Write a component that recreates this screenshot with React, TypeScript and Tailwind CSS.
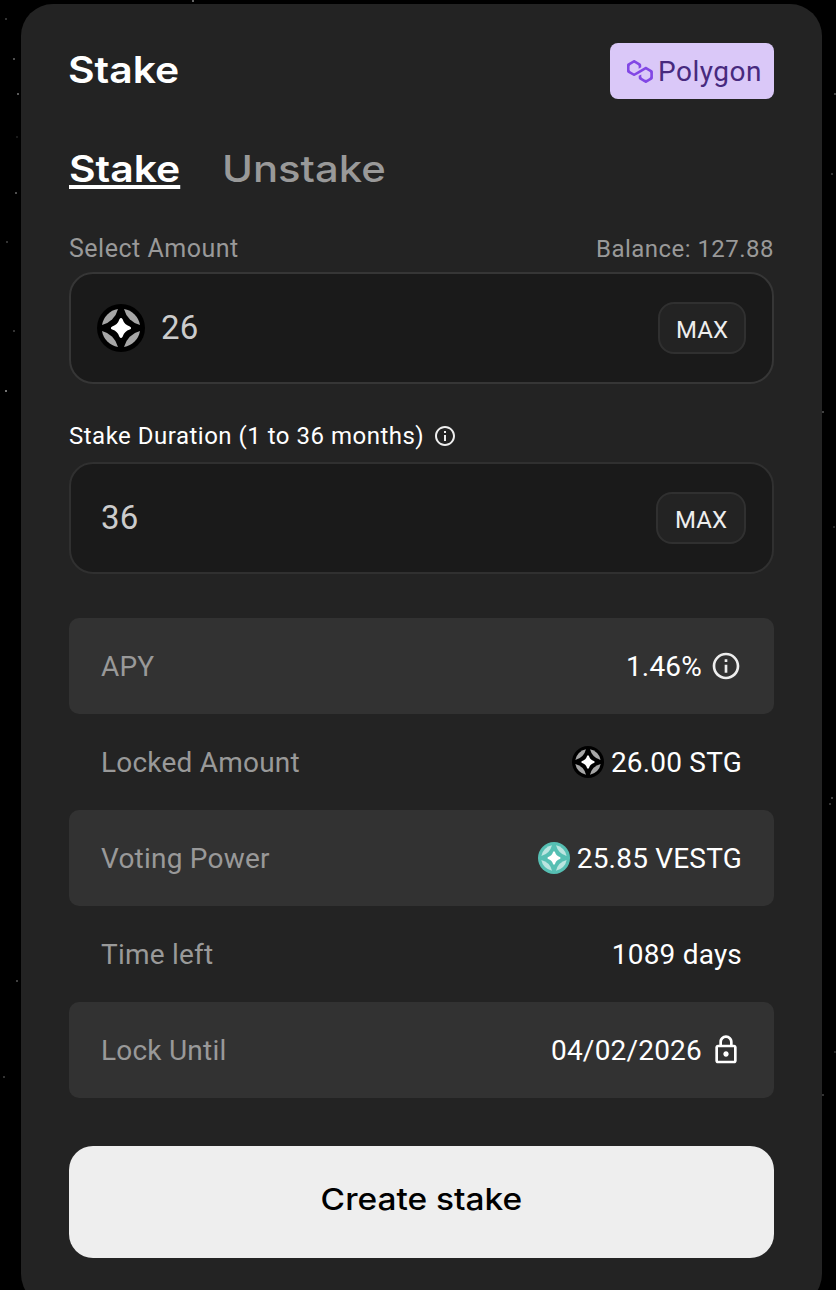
import type { ReactNode } from "react";

function Token({ size, ring, petal }: { size: number; ring: string; petal: string }) {
  return (
    <svg width={size} height={size} viewBox="0 0 48 48" className="shrink-0">
      <circle cx="24" cy="24" r="24" fill={ring} />
      {[0, 90, 180, 270].map((a) => (
        <path key={a} d="M5 21A19.300 19.300 0 0 1 21 5A22 22 0 0 1 5 21Z" fill={petal} transform={`rotate(${a} 24 24)`} />
      ))}
      <path d="M22.400 15.200Q24 12.600 25.600 15.200Q27.300 20.700 32.800 22.400Q35.400 24 32.800 25.600Q27.300 27.300 25.600 32.800Q24 35.400 22.400 32.800Q20.700 27.300 15.200 25.600Q12.600 24 15.200 22.400Q20.700 20.700 22.400 15.200Z" fill="#fff" />
    </svg>
  );
}

function Info({ size }: { size: number }) {
  return (
    <svg width={size} height={size} viewBox="0 0 24 24" fill="#eee" className="shrink-0">
      <path d="M11 7h2v2h-2zm0 4h2v6h-2zm1-9C6.480 2 2 6.480 2 12s4.480 10 10 10 10-4.480 10-10S17.520 2 12 2zm0 18c-4.410 0-8-3.590-8-8s3.590-8 8-8 8 3.590 8 8-3.590 8-8 8z" />
    </svg>
  );
}

function Lock() {
  return (
    <svg width="32" height="32" viewBox="0 0 24 24" fill="#fff" className="shrink-0">
      <path d="M18 8h-1V6c0-2.760-2.240-5-5-5S7 3.240 7 6v2H6c-1.100 0-2 .9-2 2v10c0 1.100.9 2 2 2h12c1.100 0 2-.9 2-2V10c0-1.100-.9-2-2-2zM9 6c0-1.660 1.340-3 3-3s3 1.340 3 3v2H9V6zm9 14H6V10h12v10zm-6-3c1.100 0 2-.9 2-2s-.9-2-2-2-2 .9-2 2 .9 2 2 2z" />
    </svg>
  );
}

function Polygon() {
  return (
    <svg width="26" height="23" viewBox="0 0 38.400 33.500" fill="#8247e5" className="shrink-0">
      <path d="M29 10.200c-.7-.4-1.600-.4-2.400 0L21 13.500l-3.800 2.100-5.500 3.300c-.7.4-1.600.4-2.400 0L5 16.300c-.7-.4-1.200-1.200-1.200-2.100v-5c0-.8.4-1.600 1.200-2.100l4.300-2.500c.7-.4 1.600-.4 2.400 0L16 7.200c.7.4 1.200 1.200 1.200 2.100v3.300l3.800-2.200V7c0-.8-.4-1.600-1.200-2.100l-8-4.700c-.7-.4-1.600-.4-2.400 0L1.200 5C.4 5.400 0 6.200 0 7v9.400c0 .8.400 1.600 1.200 2.100l8.100 4.700c.7.4 1.600.4 2.400 0l5.500-3.200 3.800-2.200 5.500-3.200c.7-.4 1.600-.4 2.400 0l4.300 2.500c.7.4 1.200 1.200 1.200 2.100v5c0 .8-.4 1.600-1.200 2.100L29 28.800c-.7.4-1.600.4-2.400 0l-4.300-2.500c-.7-.4-1.200-1.200-1.200-2.100V21l-3.800 2.200v3.300c0 .8.4 1.600 1.200 2.100l8.100 4.700c.7.4 1.600.4 2.400 0l8.100-4.700c.7-.4 1.200-1.200 1.200-2.100V17c0-.8-.4-1.600-1.200-2.100L29 10.200z" />
    </svg>
  );
}

function MaxButton({ width }: { width: string }) {
  return (
    <button className={`${width} h-[52px] shrink-0 rounded-[16px] border-2 border-[#303030] bg-[#232323] pt-[4px] text-[24px] leading-none text-[#eee]`}>
      MAX
    </button>
  );
}

function Row({ label, shaded, children }: { label: string; shaded?: boolean; children: ReactNode }) {
  return (
    <div className={`flex h-24 items-center justify-between rounded-[10px] px-8 ${shaded ? "bg-[#323232]" : ""}`}>
      <span className="pt-[2px] text-[28px] tracking-[0.22px] text-[#999]">{label}</span>
      <span className="flex items-center text-[28px] tracking-[0.2px] text-white">{children}</span>
    </div>
  );
}

const stars = [
  [192, 0, 0.4], [5, 18, 0.2], [13, 58, 0.3], [17, 93, 0.35], [16, 136, 0.1], [15, 192, 0.3],
  [6, 241, 0.2], [13, 330, 0.2], [5, 390, 0.45], [834, 93, 0.25], [831, 173, 0.2],
  [822, 411, 0.25], [833, 526, 0.15], [831, 797, 0.25], [829, 803, 0.2], [16, 980, 0.25],
  [3, 1076, 0.2], [822, 1094, 0.2], [834, 1051, 0.15],
];

export default function App() {
  return (
    <div className="relative h-[1290px] w-[836px] overflow-hidden bg-black pt-1 pl-[21px] font-['Roboto',sans-serif]">
      <svg width="836" height="1290" className="absolute top-0 left-0">
        {stars.map(([x, y, o], i) => (
          <rect key={i} x={x} y={y} width="2" height="2" fill="#fff" opacity={o} />
        ))}
      </svg>
      <main className="relative h-[1302px] w-[801px] rounded-[32px] bg-[#232323] px-12 pt-[39px]">
        <header className="flex h-14 items-center justify-between">
          <h1 className="-ml-px origin-left scale-x-[1.105] pb-[2px] font-['Inter',sans-serif] text-[37px] font-semibold text-white">Stake</h1>
          <div className="flex h-14 w-[164px] items-center gap-[5px] rounded-lg bg-[#dac8f8] pl-[17px]">
            <Polygon />
            <span className="pt-[2px] text-[28px] tracking-[0.5px] text-[#472a7e]">Polygon</span>
          </div>
        </header>

        <nav className="mt-[40px] flex h-[60px] items-center font-['Inter',sans-serif] text-[37px] font-semibold">
          <span className="w-[153px]">
            <span className="inline-block origin-left scale-x-[1.105] text-white underline decoration-[4px] underline-offset-[3px] [text-decoration-skip-ink:none]">Stake</span>
          </span>
          <span className="origin-left scale-x-[1.13] font-medium text-[#999]">Unstake</span>
        </nav>

        <div className="mt-[34px] flex h-8 items-center justify-between text-[24px] text-[#999]">
          <span className="text-[25px] tracking-[0.5px]">Select Amount</span>
          <span className="tracking-[0.47px]">Balance: 127.88</span>
        </div>
        <div className="mt-[7px] flex h-28 items-center rounded-[24px] border-2 border-[#363636] bg-[#1a1a1a] px-[26px]">
          <Token size={48} ring="#000" petal="#a6a6a6" />
          <span className="ml-4 flex-1 text-[33px] tracking-[0.3px] text-[#ccc]">26</span>
          <MaxButton width="w-[88px]" />
        </div>

        <div className="mt-[36px] flex h-8 items-center gap-[9px] text-[24px] text-white">
          <span className="tracking-[0.5px]">Stake Duration (1 to 36 months)</span>
          <Info size={24} />
        </div>
        <div className="mt-[10px] flex h-28 items-center rounded-[24px] border-2 border-[#303030] bg-[#1a1a1a] pr-[26px] pl-[30px]">
          <span className="flex-1 text-[33px] tracking-[0.3px] text-[#ccc]">36</span>
          <MaxButton width="w-[90px]" />
        </div>

        <section className="mt-11">
          <Row label="APY" shaded>
            <span className="mr-2 pt-[2px]">1.46%</span>
            <Info size={32} />
          </Row>
          <Row label="Locked Amount">
            <Token size={32} ring="#000" petal="#a6a6a6" />
            <span className="ml-[7px] pt-[2px]">26.00 STG</span>
          </Row>
          <Row label="Voting Power" shaded>
            <Token size={32} ring="#56bfb3" petal="#bbe5e0" />
            <span className="ml-[7px] pt-[2px]">25.85 VESTG</span>
          </Row>
          <Row label="Time left">
            <span className="pt-[2px]">1089 days</span>
          </Row>
          <Row label="Lock Until" shaded>
            <span className="mr-2 pt-[2px]">04/02/2026</span>
            <Lock />
          </Row>
        </section>

        <button className="mt-12 flex h-28 w-full items-center justify-center rounded-[24px] bg-[#eee] pb-[6px] font-['Inter',sans-serif] text-[30px] font-medium text-black">
          <span className="scale-x-[1.115]">Create stake</span>
        </button>
      </main>
    </div>
  );
}
